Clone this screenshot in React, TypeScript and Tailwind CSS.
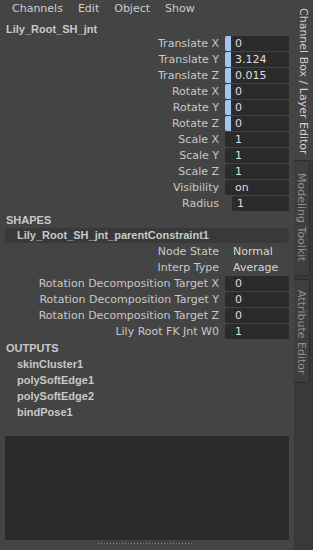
import * as React from 'react';

type Attr = {
  label: string;
  value?: string;
  keyed?: boolean;
  boxed?: boolean;
  short?: boolean;
};

const jointAttrs: Attr[] = [
  { label: 'Translate X', value: '0', keyed: true, boxed: true },
  { label: 'Translate Y', value: '3.124', keyed: true, boxed: true },
  { label: 'Translate Z', value: '0.015', keyed: true, boxed: true },
  { label: 'Rotate X', value: '0', keyed: true, boxed: true },
  { label: 'Rotate Y', value: '0', keyed: true, boxed: true },
  { label: 'Rotate Z', value: '0', keyed: true, boxed: true },
  { label: 'Scale X', value: '1', boxed: true },
  { label: 'Scale Y', value: '1', boxed: true },
  { label: 'Scale Z', value: '1', boxed: true },
  { label: 'Visibility', value: 'on', boxed: true },
  { label: 'Radius', value: '1', boxed: true, short: true },
];

const constraintAttrs: Attr[] = [
  { label: 'Node State', value: 'Normal' },
  { label: 'Interp Type', value: 'Average' },
  { label: 'Rotation Decomposition Target X', value: '0', boxed: true },
  { label: 'Rotation Decomposition Target Y', value: '0', boxed: true },
  { label: 'Rotation Decomposition Target Z', value: '0', boxed: true },
  { label: 'Lily Root FK Jnt W0', value: '1', boxed: true },
];

const outputs = ['skinCluster1', 'polySoftEdge1', 'polySoftEdge2', 'bindPose1'];

// bold headings are narrower in the original, Liberation Sans Bold fits the widths
const boldFont = { fontFamily: '"Liberation Sans", "DejaVu Sans", sans-serif' };

function AttrRow({ attr }: { attr: Attr }) {
  return (
    <div className="flex h-[16px] items-start">
      <div className="flex-1 h-[15px] leading-[15px] text-right pr-[6px] whitespace-nowrap">{attr.label}</div>
      <div className="w-[64px] h-[15px] flex justify-end">
        {attr.boxed ? (
          <div className={`${attr.short ? 'w-[57px]' : 'w-[64px]'} h-[15px] bg-[#2b2b2b] rounded-[2px] flex items-stretch overflow-hidden`}>
            {attr.keyed ? <div className="w-[6px] bg-[#a3c6ec]" /> : null}
            <div className={`${attr.keyed ? 'pl-[4px]' : attr.short ? 'pl-[5px]' : 'pl-[10px]'} leading-[15px] text-[#dedede]`}>
              {attr.value}
            </div>
          </div>
        ) : (
          <div className="w-[64px] pl-[8px] leading-[15px] text-[#d6d6d6]">{attr.value}</div>
        )}
      </div>
    </div>
  );
}

function SideTabs() {
  return (
    <div className="w-[19px] bg-[#393939] flex flex-col text-[11px] leading-none">
      <div className="h-[160px] bg-[#444444] flex justify-center pt-[8px]">
        <span className="[writing-mode:vertical-rl] text-[#cfcfcf]">Channel Box / Layer Editor</span>
      </div>
      <div className="h-[116px] w-[16px] bg-[#3e3e3e] border border-l-0 border-[#2c2c2c] rounded-r-[3px] flex justify-center pt-[12px]">
        <span className="[writing-mode:vertical-rl] text-[#8e8e8e]">Modeling Toolkit</span>
      </div>
      <div className="h-[3px]" />
      <div className="h-[104px] w-[16px] bg-[#3e3e3e] border border-l-0 border-[#2c2c2c] rounded-r-[3px] flex justify-center pt-[10px]">
        <span className="[writing-mode:vertical-rl] text-[#8e8e8e]">Attribute Editor</span>
      </div>
      <div className="flex-1" />
    </div>
  );
}

export default function App() {
  return (
    <div
      className="w-[313px] h-[550px] flex bg-[#444444] text-[#c8c8c8] text-[11px] overflow-hidden select-none"
      style={{ fontFamily: '"DejaVu Sans", "Liberation Sans", sans-serif' }}
    >
      <div className="flex-1 flex flex-col pr-[5px]">
        <div className="h-[18px] flex items-center gap-[15px] pl-[12px] text-[#cdcdcd]">
          <span>Channels</span>
          <span>Edit</span>
          <span>Object</span>
          <span>Show</span>
        </div>
        <div className="h-[18px] leading-[18px] pt-[2px] pl-[6px] font-bold" style={boldFont}>
          Lily_Root_SH_jnt
        </div>

        {jointAttrs.map((a) => (
          <AttrRow key={a.label} attr={a} />
        ))}

        <div className="h-[16px] leading-[16px] pl-[6px] font-bold" style={boldFont}>
          SHAPES
        </div>
        <div className="h-[15px] leading-[15px] ml-[5px] bg-[#393939] pl-[12px] font-bold" style={boldFont}>
          Lily_Root_SH_jnt_parentConstraint1
        </div>
        <div className="h-[1px]" />
        {constraintAttrs.map((a) => (
          <AttrRow key={a.label} attr={a} />
        ))}

        <div className="h-[16px] leading-[16px] pl-[6px] font-bold" style={boldFont}>
          OUTPUTS
        </div>
        {outputs.map((o) => (
          <div key={o} className="h-[16px] leading-[16px] pl-[17px] font-bold" style={boldFont}>
            {o}
          </div>
        ))}

        <div className="h-[16px]" />
        <div className="h-[104px] ml-[5px] bg-[#2b2b2b]" />
        <div className="flex-1 flex justify-center pt-[3px]">
          <div className="flex gap-[2px] h-[1px]">
            {Array.from({ length: 32 }).map((_, i) => (
              <span key={i} className="w-[1px] h-[1px] bg-[#8a8a8a]" />
            ))}
          </div>
        </div>
      </div>
      <SideTabs />
    </div>
  );
}
